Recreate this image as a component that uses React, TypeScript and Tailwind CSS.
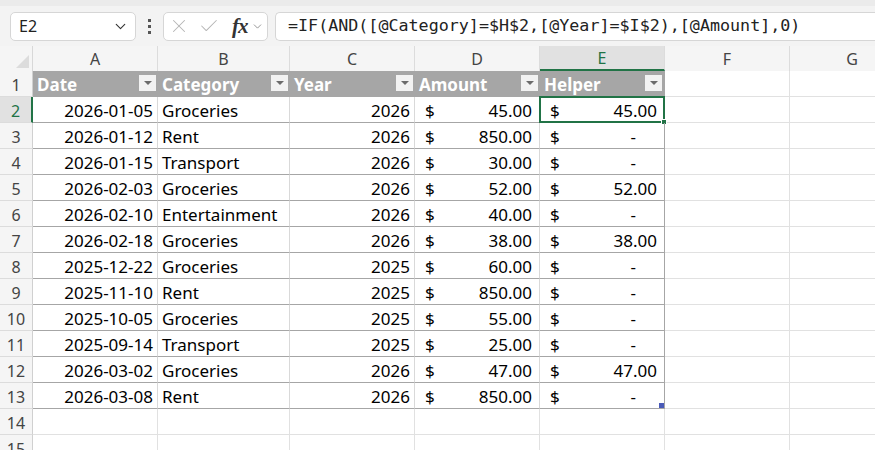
import React from 'react';
import { ChevronDown, X, Check } from 'lucide-react';

const COLS = [
  { key: 'A', w: 'w-[125px]' },
  { key: 'B', w: 'w-[132px]' },
  { key: 'C', w: 'w-[125px]' },
  { key: 'D', w: 'w-[125px]' },
  { key: 'E', w: 'w-[125px]' },
  { key: 'F', w: 'w-[125px]' },
  { key: 'G', w: 'w-[125px]' },
];

const ROWS = [
  ['2026-01-05', 'Groceries', '2026', '45.00', '45.00'],
  ['2026-01-12', 'Rent', '2026', '850.00', '-'],
  ['2026-01-15', 'Transport', '2026', '30.00', '-'],
  ['2026-02-03', 'Groceries', '2026', '52.00', '52.00'],
  ['2026-02-10', 'Entertainment', '2026', '40.00', '-'],
  ['2026-02-18', 'Groceries', '2026', '38.00', '38.00'],
  ['2025-12-22', 'Groceries', '2025', '60.00', '-'],
  ['2025-11-10', 'Rent', '2025', '850.00', '-'],
  ['2025-10-05', 'Groceries', '2025', '55.00', '-'],
  ['2025-09-14', 'Transport', '2025', '25.00', '-'],
  ['2026-03-02', 'Groceries', '2026', '47.00', '47.00'],
  ['2026-03-08', 'Rent', '2026', '850.00', '-'],
];

const HEADERS = ['Date', 'Category', 'Year', 'Amount', 'Helper'];

const FilterBtn = () => (
  <div className="absolute right-[2px] top-[4px] w-[17px] h-[16px] bg-[#f2f2f2] flex items-center justify-center">
    <div className="w-0 h-0 border-l-[4px] border-r-[4px] border-t-[4px] border-l-transparent border-r-transparent border-t-[#6b6b6b]" />
  </div>
);

const RowHead = ({ n, active }: { n: number; active?: boolean }) => (
  <div
    className={`w-[33px] h-[26px] shrink-0 flex items-center justify-center pt-[2px] text-[16px] border-b border-[#dcdcdc] ${
      active ? 'bg-[#e1e1e1] text-[#217346] border-r-2 border-r-[#217346]' : 'bg-[#f5f5f5] text-[#444] border-r border-r-[#d0d0d0]'
    }`}
  >
    {n}
  </div>
);

export default function App() {
  return (
    <div className="w-[875px] h-[450px] overflow-hidden bg-white font-['Noto_Sans',sans-serif] text-black">
      {/* formula bar */}
      <div className="h-[46px] bg-[#f3f3f3] border-t-[6px] border-[#ebebeb] flex items-center pl-[10px]">
        <div className="w-[126px] h-[29px] bg-white border border-[#d6d6d6] rounded-[5px] flex items-center justify-between pl-[8px] pr-[6px] text-[16px] text-[#222]">
          <span>E2</span>
          <ChevronDown size={17} strokeWidth={1.6} className="text-[#333]" />
        </div>
        <div className="w-[27px] flex flex-col items-center gap-[3px]">
          <div className="w-[3px] h-[3px] bg-[#555]" />
          <div className="w-[3px] h-[3px] bg-[#555]" />
          <div className="w-[3px] h-[3px] bg-[#555]" />
        </div>
        <div className="w-[105px] h-[29px] bg-white border border-[#d6d6d6] rounded-[5px] flex items-center pl-[4px]">
          <X size={22} strokeWidth={1.1} className="text-[#b5b5b5]" />
          <Check size={22} strokeWidth={1.1} className="text-[#b5b5b5] ml-[8px]" />
          <span className="ml-[12px] font-['Liberation_Serif',serif] italic font-bold text-[21px] leading-none text-[#333] tracking-[-1px]">fx</span>
          <ChevronDown size={13} strokeWidth={1.4} className="text-[#777] ml-[3px]" />
        </div>
        <div className="ml-[7px] flex-1 h-[29px] bg-white border border-[#d6d6d6] border-r-0 rounded-l-[5px] flex items-center pl-[12px] font-['DejaVu_Sans_Mono',monospace] text-[16.7px] text-[#222] whitespace-nowrap">
          =IF(AND([@Category]=$H$2,[@Year]=$I$2),[@Amount],0)
        </div>
      </div>

      {/* column headers */}
      <div className="flex h-[25px]">
        <div className="relative w-[33px] shrink-0 bg-[#f5f5f5] border-r border-[#d8d8d8]">
          <div className="absolute right-[3px] bottom-[3px] w-0 h-0 border-b-[13px] border-l-[13px] border-b-[#dcdcdc] border-l-transparent" />
        </div>
        {COLS.map(c => (
          <div
            key={c.key}
            className={`${c.w} shrink-0 flex items-center justify-center pt-[1px] text-[16px] border-r border-[#dcdcdc] ${
              c.key === 'E' ? 'bg-[#e1e1e1] text-[#217346] border-b-2 border-b-[#217346]' : 'bg-[#f5f5f5] text-[#444]'
            }`}
          >
            {c.key}
          </div>
        ))}
      </div>

      {/* row 1: table header */}
      <div className="flex">
        <RowHead n={1} />
        {COLS.map((c, i) =>
          i < 5 ? (
            <div
              key={c.key}
              className={`${c.w} relative shrink-0 h-[26px] bg-[#a6a6a6] text-white font-bold text-[17px] flex items-center pt-[2px] pl-[4px] ${i === 4 ? 'border-r border-[#a6a6a6]' : ''}`}
            >
              {HEADERS[i]}
              <FilterBtn />
            </div>
          ) : (
            <div key={c.key} className={`${c.w} shrink-0 h-[26px] border-r border-b border-[#e1e1e1]`} />
          )
        )}
      </div>

      {/* data rows */}
      {ROWS.map((r, ri) => (
        <div key={ri} className="flex">
          <RowHead n={ri + 2} active={ri === 0} />
          <div className="w-[125px] shrink-0 h-[26px] border-r border-r-[#d9d9d9] border-b border-b-[#a6a6a6] flex items-center justify-end pt-[2px] pr-[4px] text-[17px]">{r[0]}</div>
          <div className="w-[132px] shrink-0 h-[26px] border-r border-r-[#d9d9d9] border-b border-b-[#a6a6a6] flex items-center pt-[2px] pl-[4px] text-[17px]">{r[1]}</div>
          <div className="w-[125px] shrink-0 h-[26px] border-r border-r-[#d9d9d9] border-b border-b-[#a6a6a6] flex items-center justify-end pt-[2px] pr-[4px] text-[17px]">{r[2]}</div>
          <div className="w-[125px] shrink-0 h-[26px] border-r border-r-[#d9d9d9] border-b border-b-[#a6a6a6] flex items-center justify-between pt-[2px] pl-[10px] pr-[7px] text-[17px]">
            <span>$</span>
            <span>{r[3]}</span>
          </div>
          <div className="relative w-[125px] shrink-0 h-[26px] border-r border-r-[#a6a6a6] border-b border-b-[#a6a6a6] flex items-center justify-between pt-[2px] pl-[10px] text-[17px]">
            <span>$</span>
            <span className={r[4] === '-' ? 'pr-[28px]' : 'pr-[7px]'}>{r[4]}</span>
            {ri === 0 && (
              <div className="absolute left-[-1px] top-[-1px] right-[-1px] bottom-[-1px] border-2 border-[#217346]">
                <div className="absolute right-[-4px] bottom-[-4px] w-[6px] h-[6px] bg-[#217346] border border-white" />
              </div>
            )}
            {ri === ROWS.length - 1 && (
              <div className="absolute right-0 bottom-0 w-[5px] h-[5px] bg-[#4a5bb8]" />
            )}
          </div>
          <div className="w-[125px] shrink-0 h-[26px] border-r border-b border-[#e1e1e1]" />
          <div className="w-[125px] shrink-0 h-[26px] border-r border-b border-[#e1e1e1]" />
        </div>
      ))}

      {/* empty rows */}
      {[14, 15].map(n => (
        <div key={n} className="flex">
          <RowHead n={n} />
          {COLS.map(c => (
            <div key={c.key} className={`${c.w} shrink-0 h-[26px] border-r border-b border-[#e1e1e1]`} />
          ))}
        </div>
      ))}
    </div>
  );
}
